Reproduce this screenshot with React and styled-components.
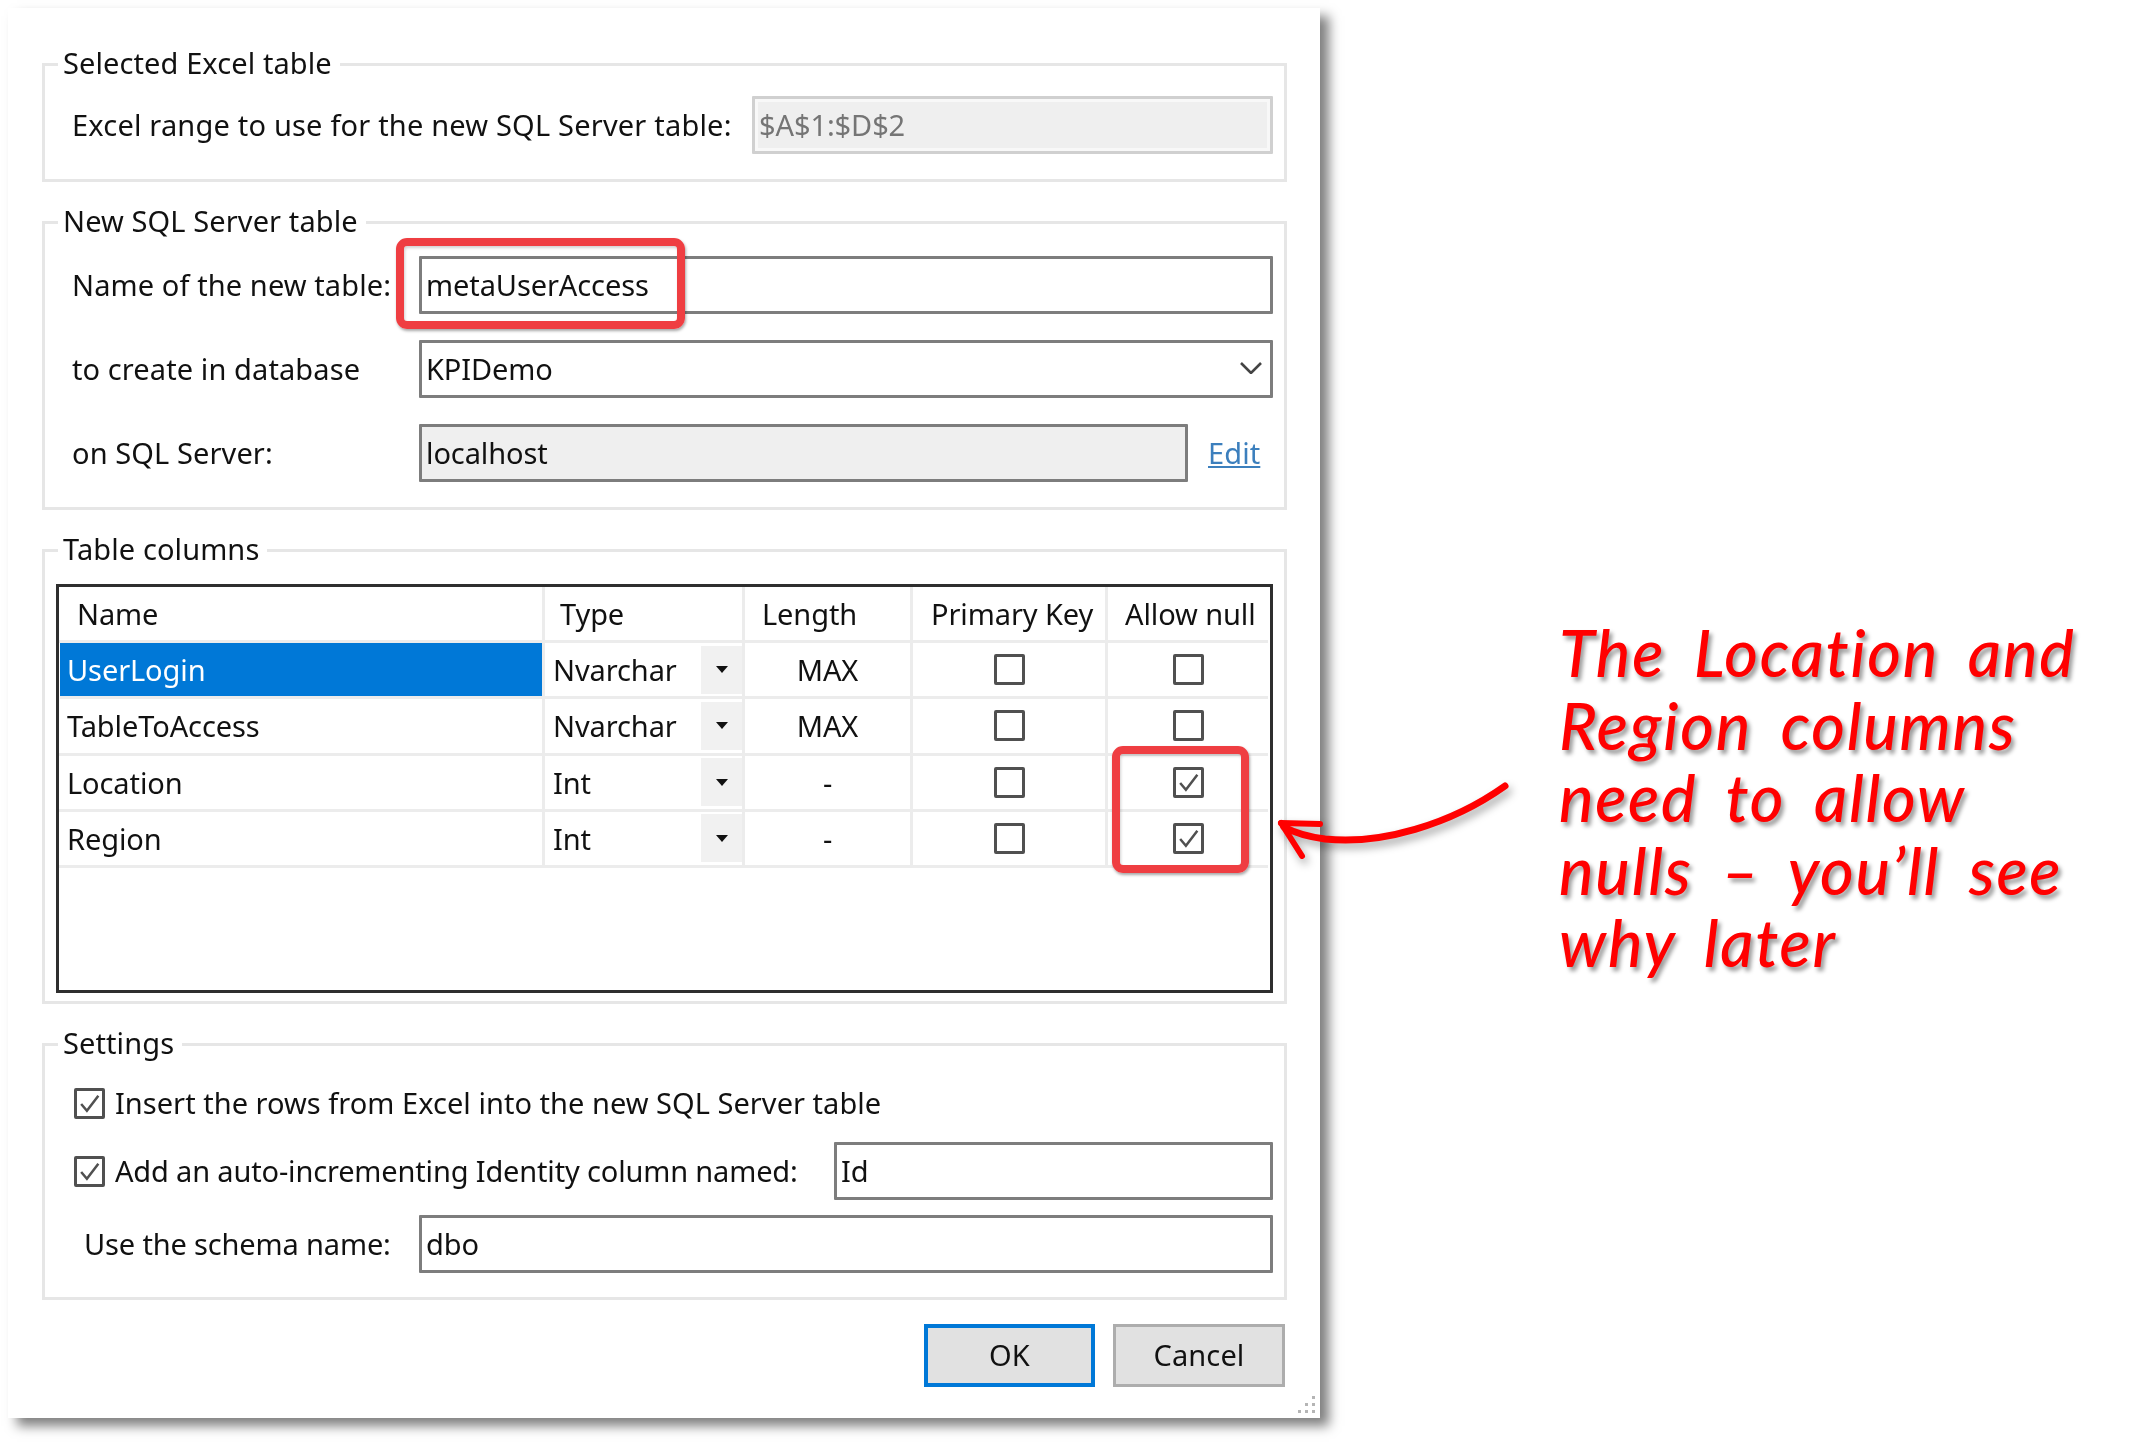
import styled, { createGlobalStyle, css } from 'styled-components';

const GlobalStyle = createGlobalStyle`
  html, body {
    margin: 0;
    background: #fff;
  }
`;

const Page = styled.div`
  position: relative;
  display: flex;
  align-items: flex-start;
  width: 2153px;
  height: 1447px;
  padding: 8px 0 0 8px;
  box-sizing: border-box;
  overflow: hidden;
  font-family: "Noto Sans", "Open Sans", sans-serif;
  font-size: 29px;
  letter-spacing: 0.1px;
  color: #111;
`;

const Dialog = styled.div`
  position: relative;
  flex: none;
  display: flex;
  flex-direction: column;
  gap: 23px;
  width: 1312px;
  height: 1410px;
  padding: 39px 33px 0 34px;
  box-sizing: border-box;
  background: #fff;
  box-shadow: 9px 8px 11px rgba(0, 0, 0, 0.5);
  filter: blur(0.4px);
`;

const Group = styled.fieldset`
  margin: 0;
  min-width: 0;
  padding: ${(p) => p.$padding};
  border: 3px solid #e6e6e6;

  legend {
    margin-left: 2px;
    padding: 0 8px 0 5px;
    height: 34px;
    line-height: 32px;
  }
`;

const GroupBody = styled.div`
  display: flex;
  flex-direction: column;
  gap: ${(p) => p.$gap || 0}px;
  padding-left: 16px;
`;

const FieldRow = styled.div`
  position: relative;
  display: flex;
  align-items: center;
  height: 58px;
  margin-top: ${(p) => p.$top || 0}px;
`;

const Label = styled.span`
  flex: none;
  width: ${(p) => p.$width}px;
  padding-left: ${(p) => p.$indent || 0}px;
  padding-bottom: 2px;
  box-sizing: border-box;
  white-space: nowrap;
  letter-spacing: ${(p) => p.$tracking ?? 0.1}px;
`;

const Input = styled.div`
  flex: 1;
  display: flex;
  align-items: center;
  justify-content: space-between;
  height: 58px;
  padding: 0 8px 2px 4px;
  box-sizing: border-box;
  border: 3px solid #7d7d7d;
  border-radius: 1px;
  background: #fff;
  white-space: nowrap;
  letter-spacing: -0.1px;
  ${(p) =>
    p.$variant === 'locked' &&
    css`
      background: #efefef;
    `}
  ${(p) =>
    p.$variant === 'disabled' &&
    css`
      background: #efefef;
      border-color: #d0d0d0;
      box-shadow: inset 0 0 0 3px #f8f8f8;
      color: #757575;
    `}
`;

const EditLink = styled.a`
  flex: none;
  width: 54px;
  margin: 0 11px 2px 20px;
  color: #3c7fbd;
  text-decoration: underline;
`;

const Highlight = styled.div`
  position: absolute;
  left: ${(p) => p.$left}px;
  top: ${(p) => p.$top}px;
  width: ${(p) => p.$width}px;
  height: ${(p) => p.$height}px;
  box-sizing: border-box;
  border: 8px solid #ef3e42;
  border-radius: 11px;
  box-shadow: 1px 2px 3px rgba(0, 0, 0, 0.35), inset 1px 2px 3px rgba(0, 0, 0, 0.18);
  pointer-events: none;
`;

const ColumnsTable = styled.div`
  position: relative;
  height: 409px;
  box-sizing: border-box;
  border: 3px solid #2e2e2e;
`;

const TableRow = styled.div`
  display: grid;
  grid-template-columns: 486px 200px 168px 195px 160px;
  height: ${(p) => (p.$header ? 56 : 56.25)}px;
`;

const Cell = styled.div`
  display: flex;
  align-items: center;
  justify-content: ${(p) => (p.$center ? 'center' : 'flex-start')};
  padding-left: ${(p) => (p.$center ? 0 : p.$pad ?? 8)}px;
  box-sizing: border-box;
  border-bottom: 3px solid #ececec;
  border-right: ${(p) => (p.$last ? 0 : '3px solid #ececec')};
  white-space: nowrap;
  letter-spacing: -0.1px;
  ${(p) =>
    p.$selected &&
    css`
      margin-left: 1px;
      padding-left: 7px;
      background: #0078d7;
      color: #fff;
    `}
`;

const TypeText = styled.span`
  flex: 1;
`;

const TypeButton = styled.span`
  flex: none;
  display: flex;
  align-items: center;
  justify-content: center;
  width: 41px;
  height: 48px;
  background: #f1f1f1;

  &::after {
    content: '';
    border-top: 7px solid #111;
    border-left: 6px solid transparent;
    border-right: 6px solid transparent;
  }
`;

const Box = styled.span`
  flex: none;
  display: inline-flex;
  width: 31px;
  height: 31px;
  box-sizing: border-box;
  border: 3px solid #505050;
  border-radius: 2px;
  background: #fff;
`;

const CheckRow = styled.div`
  display: flex;
  align-items: center;
  gap: 10px;
  padding-left: 2px;
  height: ${(p) => p.$height}px;
  white-space: nowrap;
`;

const CheckText = styled.span`
  margin-bottom: 2px;
  letter-spacing: ${(p) => p.$tracking}px;
`;

const CheckInputRow = styled.div`
  display: flex;
  align-items: center;
  height: 58px;
  margin-top: 24px;

  ${CheckRow} {
    flex: none;
    width: 762px;
    box-sizing: border-box;
  }
`;

const Footer = styled.div`
  display: flex;
  justify-content: flex-end;
  gap: 18px;
  margin: 1px 2px 0 0;
`;

const Button = styled.div`
  display: flex;
  align-items: center;
  justify-content: center;
  width: ${(p) => (p.$primary ? 171 : 172)}px;
  height: 63px;
  padding-bottom: 2px;
  box-sizing: border-box;
  background: #e1e1e1;
  border: ${(p) => (p.$primary ? '4px solid #0078d7' : '3px solid #adadad')};
`;

const Grip = styled.svg`
  position: absolute;
  right: 3px;
  bottom: 3px;
`;

const Note = styled.div`
  flex: none;
  margin: 608px 0 0 239px;
  font-family: "Lato", "Open Sans", sans-serif;
  font-style: italic;
  font-weight: 500;
  font-size: 65px;
  line-height: 72.6px;
  letter-spacing: 1.7px;
  word-spacing: 12px;
  white-space: nowrap;
  color: #ff0000;
  text-shadow: 3px 4px 4px rgba(0, 0, 0, 0.4);
`;

const Arrow = styled.svg`
  position: absolute;
  left: 1270px;
  top: 775px;
  overflow: visible;
  filter: drop-shadow(3px 5px 4px rgba(0, 0, 0, 0.35));
`;

function Tick({ on }) {
  return (
    <Box>
      {on && (
        <svg width="25" height="25" viewBox="0 0 24 24">
          <path d="M4 12.5 L9.5 19 L20.5 4.5" fill="none" stroke="#505050" strokeWidth="2.4" />
        </svg>
      )}
    </Box>
  );
}

const rows = [
  { name: 'UserLogin', type: 'Nvarchar', length: 'MAX', selected: true },
  { name: 'TableToAccess', type: 'Nvarchar', length: 'MAX' },
  { name: 'Location', type: 'Int', length: '-', allowNull: true },
  { name: 'Region', type: 'Int', length: '-', allowNull: true },
];

export default function App() {
  return (
    <Page>
      <GlobalStyle />
      <Dialog>
        <Group $padding="15px 11px 25px 11px">
          <legend>Selected Excel table</legend>
          <GroupBody>
            <FieldRow>
              <Label $width={680} $tracking={0.19}>Excel range to use for the new SQL Server table:</Label>
              <Input $variant="disabled">$A$1:$D$2</Input>
            </FieldRow>
          </GroupBody>
        </Group>

        <Group $padding="17px 11px 25px 11px">
          <legend>New SQL Server table</legend>
          <GroupBody $gap={26}>
            <FieldRow>
              <Label $width={347}>Name of the new table:</Label>
              <Input>metaUserAccess</Input>
              <Highlight $left={324} $top={-18} $width={289} $height={91} />
            </FieldRow>
            <FieldRow>
              <Label $width={347}>to create in database</Label>
              <Input>
                KPIDemo
                <svg width="22" height="12" viewBox="0 0 22 12">
                  <path d="M1 1 L11 11 L21 1" fill="none" stroke="#444" strokeWidth="2.6" />
                </svg>
              </Input>
            </FieldRow>
            <FieldRow>
              <Label $width={347}>on SQL Server:</Label>
              <Input $variant="locked">localhost</Input>
              <EditLink>Edit</EditLink>
            </FieldRow>
          </GroupBody>
        </Group>

        <Group $padding="17px 11px 8px 11px">
          <legend>Table columns</legend>
          <ColumnsTable>
            <TableRow $header>
              <Cell $pad={18}>Name</Cell>
              <Cell $pad={15}>Type</Cell>
              <Cell $pad={17}>Length</Cell>
              <Cell $pad={18}>Primary Key</Cell>
              <Cell $pad={17} $last>Allow null</Cell>
            </TableRow>
            {rows.map((row) => (
              <TableRow key={row.name}>
                <Cell $selected={row.selected}>{row.name}</Cell>
                <Cell>
                  <TypeText>{row.type}</TypeText>
                  <TypeButton />
                </Cell>
                <Cell $center>{row.length}</Cell>
                <Cell $center>
                  <Tick />
                </Cell>
                <Cell $center $last>
                  <Tick on={row.allowNull} />
                </Cell>
              </TableRow>
            ))}
            <Highlight $left={1053} $top={159} $width={137} $height={127} />
          </ColumnsTable>
        </Group>

        <Group $padding="27px 11px 24px 11px">
          <legend>Settings</legend>
          <GroupBody>
            <CheckRow $height={30}>
              <Tick on />
              <CheckText $tracking={0.03}>Insert the rows from Excel into the new SQL Server table</CheckText>
            </CheckRow>
            <CheckInputRow>
              <CheckRow $height={58}>
                <Tick on />
                <CheckText $tracking={-0.16}>Add an auto-incrementing Identity column named:</CheckText>
              </CheckRow>
              <Input>Id</Input>
            </CheckInputRow>
            <FieldRow $top={15}>
              <Label $width={347} $indent={12} $tracking={-0.15}>Use the schema name:</Label>
              <Input>dbo</Input>
            </FieldRow>
          </GroupBody>
        </Group>

        <Footer>
          <Button $primary>OK</Button>
          <Button>Cancel</Button>
        </Footer>
        <Grip width="20" height="20" viewBox="0 0 20 20" fill="#b5b5b5">
          <rect x="15" y="1" width="3" height="3" />
          <rect x="8" y="8" width="3" height="3" />
          <rect x="15" y="8" width="3" height="3" />
          <rect x="1" y="15" width="3" height="3" />
          <rect x="8" y="15" width="3" height="3" />
          <rect x="15" y="15" width="3" height="3" />
        </Grip>
      </Dialog>

      <Note>
        The Location and
        <br />
        Region columns
        <br />
        need to allow
        <br />
        nulls – you’ll see
        <br />
        why later
      </Note>

      <Arrow width="240" height="90" viewBox="0 0 240 90" fill="none" stroke="#ff0000" strokeLinecap="round">
        <path d="M235 11 C 180 50, 110 70, 55 64 C 40 62, 25 58, 14 52" strokeWidth="7" />
        <path d="M11 48 L50 49" strokeWidth="6" />
        <path d="M11 48 L32 81" strokeWidth="6" />
      </Arrow>
    </Page>
  );
}
